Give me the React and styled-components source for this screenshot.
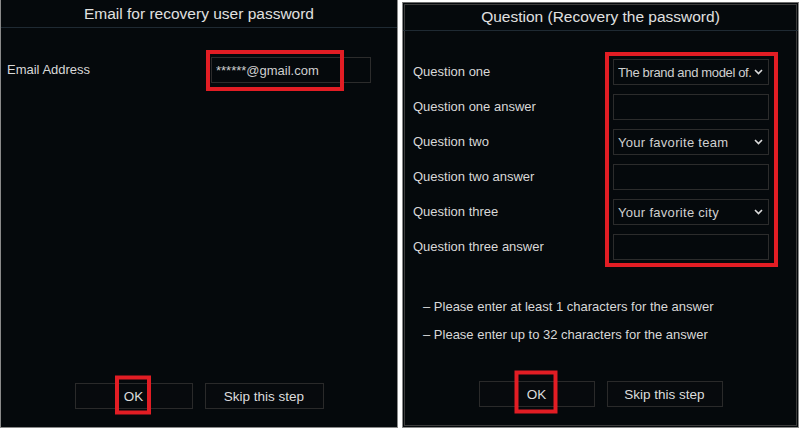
import React from "react";
import styled, { createGlobalStyle } from "styled-components";

const GlobalStyle = createGlobalStyle`
  body {
    margin: 0;
    background: #ffffff;
    font-family: "Liberation Sans", Arial, sans-serif;
  }
`;

const Page = styled.div`
  display: flex;
  align-items: flex-start;
  gap: 4px;
  width: 800px;
  height: 428px;
`;

const Panel = styled.div`
  display: flex;
  flex-direction: column;
  box-sizing: border-box;
  background: #05090c;
  color: #dcdcdc;
  width: ${(p) => p.w}px;
  height: ${(p) => p.h}px;
  margin-top: ${(p) => p.top || 0}px;
  border: 1px solid #8a8a8a;
  border-top: ${(p) => (p.boxed ? "1px solid #6c6c6c" : "none")};
  box-shadow: ${(p) =>
    p.boxed ? "inset 0 0 0 1px #05090c, inset 0 0 0 2px #3c3c3c" : "none"};
`;

const Header = styled.div`
  height: ${(p) => p.h}px;
  display: flex;
  align-items: center;
  justify-content: center;
  font-size: 15.5px;
  color: #e0e0e0;
  border-bottom: 1px solid #1f2a33;
  flex-shrink: 0;
`;

const Body = styled.div`
  flex: 1;
  display: flex;
  flex-direction: column;
  padding-top: ${(p) => p.top}px;
`;

const Indent = styled.div`
  padding-left: ${(p) => p.left}px;
`;

const EmailRow = styled.div`
  display: grid;
  grid-template-columns: 204px 160px;
  align-items: center;
`;

const Label = styled.div`
  font-size: 13px;
  color: #d8d8d8;
  height: 26px;
  line-height: 26px;
  white-space: nowrap;
`;

const Field = styled.div`
  position: relative;
  box-sizing: border-box;
  height: 26px;
  border: 1px solid #2c2c2c;
  background: #05090c;
  display: flex;
  align-items: center;
  justify-content: space-between;
  padding: 0 5px 0 4px;
  font-size: 13px;
  color: #d0d0d0;
  white-space: nowrap;
`;

const FieldText = styled.span`
  overflow: hidden;
  white-space: nowrap;
  letter-spacing: ${(p) => p.ls || 0}px;
`;

const Chevron = styled.svg`
  flex-shrink: 0;
  margin-left: 1px;
`;

const RedFrame = styled.div`
  position: absolute;
  box-sizing: border-box;
  border: 4px solid #e21d24;
  pointer-events: none;
  top: ${(p) => p.t}px;
  left: ${(p) => p.l}px;
  width: ${(p) => p.w}px;
  height: ${(p) => p.h}px;
`;

const Form = styled.div`
  display: grid;
  grid-template-columns: 200px 156px;
`;

const Stack = styled.div`
  position: relative;
  display: flex;
  flex-direction: column;
  gap: 9px;
`;

const Notes = styled.div`
  display: flex;
  flex-direction: column;
  gap: 12px;
  margin-top: 39px;
  padding-left: 10px;
`;

const Note = styled.div`
  font-size: 13px;
  color: #d8d8d8;
  line-height: 16px;
  white-space: nowrap;
`;

const Actions = styled.div`
  margin-top: auto;
  display: flex;
  justify-content: center;
  gap: 12px;
  padding-bottom: ${(p) => p.bottom}px;
`;

const Button = styled.div`
  position: relative;
  box-sizing: border-box;
  width: ${(p) => p.w}px;
  height: 26px;
  border: 1px solid #2a2a2a;
  background: #070a0d;
  display: flex;
  align-items: center;
  justify-content: center;
  font-size: 13.5px;
  color: #dcdcdc;
`;

const Mark = styled.div`
  position: absolute;
  box-sizing: border-box;
  border: 4px solid #e21d24;
  left: 50%;
  top: 50%;
  width: ${(p) => p.w}px;
  height: ${(p) => p.h}px;
  transform: translate(calc(-50% + ${(p) => p.dx}px), calc(-50% + ${(p) => p.dy}px));
`;

const Down = () => (
  <Chevron width="9" height="6" viewBox="0 0 9 6">
    <path d="M1 1 L4.5 4.5 L8 1" fill="none" stroke="#dcdcdc" strokeWidth="1.6" />
  </Chevron>
);

const questions = [
  { label: "Question one", value: "The brand and model of.", select: true, ls: -0.35 },
  { label: "Question one answer" },
  { label: "Question two", value: "Your favorite team", select: true, ls: 0.3 },
  { label: "Question two answer" },
  { label: "Question three", value: "Your favorite city", select: true, ls: 0.3 },
  { label: "Question three answer" },
];

export default function App() {
  return (
    <>
      <GlobalStyle />
      <Page>
        <Panel w={398} h={428}>
          <Header h={27}>Email for recovery user password</Header>
          <Body top={29}>
            <Indent left={6}>
              <EmailRow>
                <Label>Email Address</Label>
                <Field>
                  <FieldText>******@gmail.com</FieldText>
                  <RedFrame t={-8} l={-6} w={138} h={41} />
                </Field>
              </EmailRow>
            </Indent>
            <Actions bottom={18}>
              <Button w={118}>
                OK
                <Mark w={36} h={39} dx={-1} dy={-1} />
              </Button>
              <Button w={119}>Skip this step</Button>
            </Actions>
          </Body>
        </Panel>
        <Panel w={397} h={426} top={2} boxed>
          <Header h={27}>Question (Recovery the password)</Header>
          <Body top={28}>
            <Indent left={10}>
              <Form>
                <Stack>
                  {questions.map((q) => (
                    <Label key={q.label}>{q.label}</Label>
                  ))}
                </Stack>
                <Stack>
                  {questions.map((q) => (
                    <Field key={q.label}>
                      <FieldText ls={q.ls}>{q.value || ""}</FieldText>
                      {q.select && <Down />}
                    </Field>
                  ))}
                  <RedFrame t={-7} l={-8} w={173} h={215} />
                </Stack>
              </Form>
              <Notes>
                <Note>– Please enter at least 1 characters for the answer</Note>
                <Note>– Please enter up to 32 characters for the answer</Note>
              </Notes>
            </Indent>
            <Actions bottom={20}>
              <Button w={116}>
                OK
                <Mark w={43} h={43} dx={-1} dy={-2} />
              </Button>
              <Button w={116}>Skip this step</Button>
            </Actions>
          </Body>
        </Panel>
      </Page>
    </>
  );
}
